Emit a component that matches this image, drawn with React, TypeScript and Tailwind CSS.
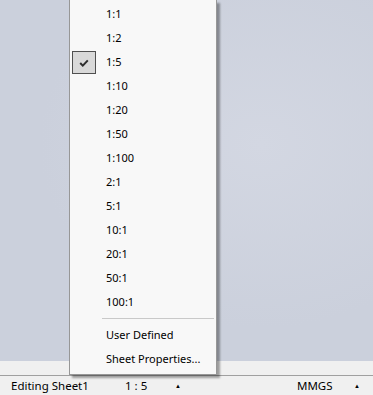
import { Fragment } from "react";

const scales = ["1:1", "1:2", "1:5", "1:10", "1:20", "1:50", "1:100", "2:1", "5:1", "10:1", "20:1", "50:1", "100:1"];

function Check() {
  return (
    <svg width="10" height="8" viewBox="0 0 10 8" className="block">
      <path d="M1.2 4 L3.8 6.6 L8.8 1.4" fill="none" stroke="#2e2e2e" strokeWidth="2" />
    </svg>
  );
}

function MenuItem({ label, checked }: { label: string; checked?: boolean }) {
  return (
    <div className="relative h-6 flex items-center pl-[36px] text-black">
      {checked && (
        <div className="absolute left-[2px] top-[1px] w-[24px] h-[23px] bg-[#d9d9d9] border border-[#505050] flex items-center justify-center">
          <Check />
        </div>
      )}
      <span>{label}</span>
    </div>
  );
}

function App() {
  return (
    <div
      className="relative w-[373px] h-[395px] overflow-hidden flex flex-col text-[11px]"
      style={{ fontFamily: '"Segoe UI", "Noto Sans", "Liberation Sans", sans-serif' }}
    >
      <div className="h-[361px] bg-[#cdd2de] bg-[radial-gradient(ellipse_at_70%_40%,#d3d7e2_0%,#cbd0dc_60%)]" />
      <div className="h-[15px] bg-[#f0f0f0] border-b border-[#a0a0a0]" />
      <div className="flex-1 bg-[#f0f0f0] flex items-center text-black leading-none text-[11.5px]">
        <span className="w-[125px] pl-[11px]">Editing Sheet1</span>
        <span className="w-[50px]">1 : 5</span>
        <span className="w-[122px] text-[6px]">▲</span>
        <span className="w-[57px]">MMGS</span>
        <span className="text-[6px]">▲</span>
      </div>

      {/* scale popup menu */}
      <div className="absolute left-[69px] top-0 w-[148px] h-[375px] bg-[#f8f8f8] border-l border-r border-b border-[#979797] shadow-[3px_3px_2px_rgba(0,0,0,0.35)] pt-[2px]">
        {scales.map((s) => (
          <Fragment key={s}>
            <MenuItem label={s} checked={s === "1:5"} />
          </Fragment>
        ))}
        <div className="h-[9px] flex items-center pl-[32px] pr-[2px]">
          <div className="h-px w-full bg-[#c9c9c9]" />
        </div>
        <MenuItem label="User Defined" />
        <MenuItem label="Sheet Properties..." />
      </div>
    </div>
  );
}

export default App;
